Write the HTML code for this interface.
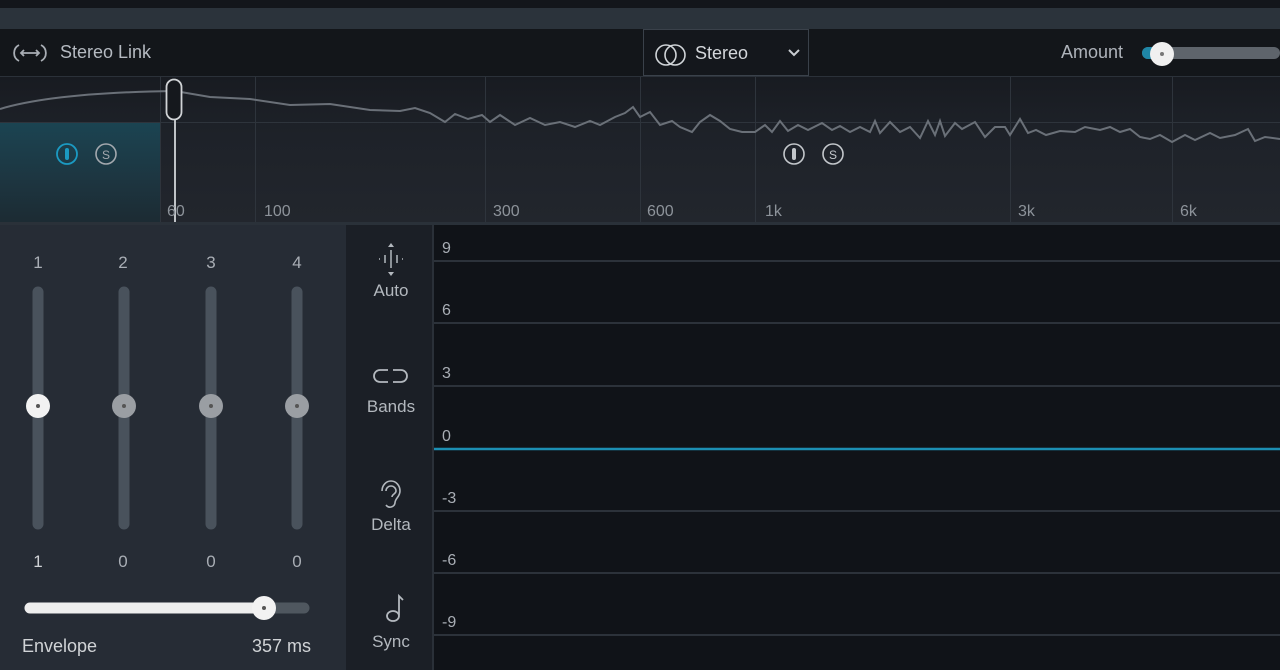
<!DOCTYPE html>
<html><head><meta charset="utf-8"><style>
*{margin:0;padding:0;box-sizing:border-box}
body{width:1280px;height:670px;overflow:hidden;background:#12151a;font-family:"Liberation Sans",sans-serif;color:#b9bec5;position:relative}
.a{position:absolute}
</style></head><body>
<div class="a" style="left:0;top:0;width:1280px;height:8px;background:#13161b"></div>
<div class="a" style="left:0;top:8px;width:1280px;height:21px;background:#2b333b"></div>
<div class="a" style="left:0;top:29px;width:1280px;height:48px;background:#13161a;border-bottom:1px solid #2b3139"></div>
<svg class="a" style="left:12px;top:42px" width="36" height="22" viewBox="0 0 36 22" fill="none" stroke="#a9aeb5" stroke-width="1.8"><path d="M7 3 A9 9 0 0 0 7 19"/><path d="M29 3 A9 9 0 0 1 29 19"/><path d="M10 11H26M12 8l-3 3 3 3M24 8l3 3-3 3"/></svg>
<div class="a" style="left:60px;top:42px;font-size:18px;color:#b5bac1">Stereo Link</div>
<div class="a" style="left:643px;top:29px;width:166px;height:47px;border:1px solid #3a414a;background:#14171c"></div>
<svg class="a" style="left:654px;top:43px" width="34" height="24" viewBox="0 0 34 24" fill="none" stroke="#d0d4d8" stroke-width="1.6"><circle cx="12" cy="12" r="10"/><circle cx="21" cy="12" r="10"/></svg>
<div class="a" style="left:695px;top:43px;font-size:18px;color:#d4d7db">Stereo</div>
<svg class="a" style="left:787px;top:48px" width="14" height="10" viewBox="0 0 14 10" fill="none" stroke="#c9cdd2" stroke-width="2"><path d="M2 2l5 5 5-5"/></svg>
<div class="a" style="left:1061px;top:42px;font-size:18px;color:#aeb3ba">Amount</div>
<div class="a" style="left:1142px;top:47px;width:138px;height:12px;border-radius:6px;background:#5e646b"></div>
<div class="a" style="left:1142px;top:47px;width:20px;height:12px;border-radius:6px;background:#1f86a6"></div>
<div class="a" style="left:1150px;top:42px;width:24px;height:24px;border-radius:50%;background:#f0f0f0"></div>
<div class="a" style="left:1160px;top:52px;width:4px;height:4px;border-radius:50%;background:#777"></div>

<!-- spectrum -->
<div class="a" style="left:0;top:77px;width:1280px;height:146px;background:linear-gradient(#181b21,#1e2229 40%,#22262d)"></div>
<div class="a" style="left:0;top:122px;width:160px;height:100px;background:linear-gradient(#1b4452,#1d3540 60%,#1c2b33)"></div>
<svg class="a" style="left:0;top:77px" width="1280" height="146">
<g stroke="#2e343c" stroke-width="1"><line x1="0" y1="45.5" x2="1280" y2="45.5"/><line x1="160.5" y1="0" x2="160.5" y2="146"/><line x1="255.5" y1="0" x2="255.5" y2="146"/><line x1="485.5" y1="0" x2="485.5" y2="146"/><line x1="640.5" y1="0" x2="640.5" y2="146"/><line x1="755.5" y1="0" x2="755.5" y2="146"/><line x1="1010.5" y1="0" x2="1010.5" y2="146"/><line x1="1172.5" y1="0" x2="1172.5" y2="146"/></g>
<path d="M0 32 C40 20 100 15 175 14 L210 20 250 22 290 28 330 27 370 33 400 34 415 31 430 36 445 45 455 37 468 42 482 38 490 45 500 38 515 48 530 41 545 48 560 45 575 50 590 44 600 48 615 40 625 36 633 30 640 40 650 35 660 48 672 44 680 50 692 55 700 45 710 38 720 44 730 52 742 55 755 55 765 48 772 55 780 44 788 54 798 48 808 53 822 46 832 53 840 49 850 55 860 50 870 55 875 44 880 56 890 45 900 55 910 50 920 61 928 44 935 58 940 44 945 59 955 46 962 52 975 45 985 60 995 50 1005 50 1010 58 1020 42 1028 56 1036 53 1046 58 1060 54 1075 55 1085 50 1100 53 1110 50 1120 55 1130 52 1140 60 1150 62 1160 58 1172 65 1185 58 1195 63 1210 56 1220 61 1235 58 1248 52 1255 64 1265 60 1280 62" fill="none" stroke="#6a7078" stroke-width="2"/>
<rect x="166.5" y="2.5" width="15" height="40" rx="7.5" fill="#15181d" stroke="#d0d3d6" stroke-width="1.8"/>
<line x1="175" y1="43" x2="175" y2="146" stroke="#bfc3c7" stroke-width="2"/>
<circle cx="67" cy="77" r="10" fill="none" stroke="#1b9ac2" stroke-width="1.8"/><rect x="65" y="71" width="4" height="12" rx="2" fill="#1b9ac2"/>
<circle cx="106" cy="77" r="10" fill="none" stroke="#a3a8ae" stroke-width="1.6"/><text x="106" y="82" font-size="12" fill="#a3a8ae" text-anchor="middle" font-family="Liberation Sans">S</text>
<circle cx="794" cy="77" r="10" fill="none" stroke="#c3c7cb" stroke-width="1.6"/><rect x="792" y="71" width="4" height="12" rx="2" fill="#c3c7cb"/>
<circle cx="833" cy="77" r="10" fill="none" stroke="#c3c7cb" stroke-width="1.6"/><text x="833" y="82" font-size="12" fill="#c3c7cb" text-anchor="middle" font-family="Liberation Sans">S</text>
<g fill="#8d939a" font-size="16" font-family="Liberation Sans"><text x="167" y="139">60</text><text x="264" y="139">100</text><text x="493" y="139">300</text><text x="647" y="139">600</text><text x="765" y="139">1k</text><text x="1018" y="139">3k</text><text x="1180" y="139">6k</text></g>
</svg>
<div class="a" style="left:0;top:222px;width:1280px;height:3px;background:#2a3139"></div>

<!-- left panel -->
<div class="a" style="left:0;top:225px;width:346px;height:445px;background:#262c35"></div>
<svg class="a" style="left:0;top:225px" width="346" height="445" font-family="Liberation Sans">
<g fill="#a9aeb5" font-size="17" text-anchor="middle"><text x="38" y="43">1</text><text x="123" y="43">2</text><text x="211" y="43">3</text><text x="297" y="43">4</text>
<text x="38" y="342" fill="#d0d3d6">1</text><text x="123" y="342">0</text><text x="211" y="342">0</text><text x="297" y="342">0</text></g>
<g stroke="#49525c" stroke-width="11" stroke-linecap="round"><line x1="38" y1="67" x2="38" y2="299"/><line x1="124" y1="67" x2="124" y2="299"/><line x1="211" y1="67" x2="211" y2="299"/><line x1="297" y1="67" x2="297" y2="299"/></g>
<circle cx="38" cy="181" r="12" fill="#f2f2f2"/><circle cx="124" cy="181" r="12" fill="#9a9ea3"/><circle cx="211" cy="181" r="12" fill="#9a9ea3"/><circle cx="297" cy="181" r="12" fill="#9a9ea3"/>
<g fill="#555"><circle cx="38" cy="181" r="2"/><circle cx="124" cy="181" r="2"/><circle cx="211" cy="181" r="2"/><circle cx="297" cy="181" r="2"/></g>
<line x1="30" y1="383" x2="304" y2="383" stroke="#4f575f" stroke-width="11" stroke-linecap="round"/>
<line x1="30" y1="383" x2="264" y2="383" stroke="#eeeeee" stroke-width="11" stroke-linecap="round"/>
<circle cx="264" cy="383" r="12" fill="#f2f2f2"/><circle cx="264" cy="383" r="2" fill="#555"/>
<text x="22" y="427" font-size="18" fill="#d0d3d6">Envelope</text><text x="311" y="427" font-size="18" fill="#d0d3d6" text-anchor="end">357 ms</text>
</svg>

<!-- side buttons -->
<div class="a" style="left:346px;top:225px;width:86px;height:445px;background:#1b1f26"></div>
<svg class="a" style="left:346px;top:225px" width="86" height="445" font-family="Liberation Sans">
<g stroke="#b3b8be" stroke-width="1.5" fill="none"><line x1="45" y1="25" x2="45" y2="43"/><line x1="39" y1="30" x2="39" y2="38"/><line x1="51" y1="30" x2="51" y2="38"/><line x1="33" y1="34" x2="34" y2="34"/><line x1="56" y1="34" x2="57" y2="34"/></g>
<path d="M45 18l-3 4h6z M45 51l-3-4h6z" fill="#b3b8be"/>
<text x="45" y="71" font-size="17" fill="#b3b8be" text-anchor="middle">Auto</text>
<path d="M42 145h-8a6 6 0 0 1 0-12h8 M47 133h8a6 6 0 0 1 0 12h-8" stroke="#b3b8be" stroke-width="1.8" fill="none" transform="translate(0,12)"/>
<text x="45" y="187" font-size="17" fill="#b3b8be" text-anchor="middle">Bands</text>
<path d="M36 266a9 10 0 1 1 18 0c0 6-5 7-5 12a5 5 0 0 1-9 2 M40 266a5 5 0 0 1 10 0c0 3-4 3-4 6" stroke="#b3b8be" stroke-width="1.6" fill="none"/>
<text x="45" y="305" font-size="17" fill="#b3b8be" text-anchor="middle">Delta</text>
<ellipse cx="47" cy="391" rx="6" ry="5" stroke="#b3b8be" stroke-width="1.8" fill="none"/><path d="M53 390V371l4 4" stroke="#b3b8be" stroke-width="1.8" fill="none"/>
<text x="45" y="422" font-size="17" fill="#b3b8be" text-anchor="middle">Sync</text>
</svg>

<!-- graph -->
<div class="a" style="left:432px;top:225px;width:848px;height:445px;background:#101318;border-left:2px solid #2a3038"></div>
<svg class="a" style="left:434px;top:225px" width="846" height="445" font-family="Liberation Sans">
<g stroke="#2c323a" stroke-width="2"><line x1="0" y1="36" x2="846" y2="36"/><line x1="0" y1="98" x2="846" y2="98"/><line x1="0" y1="161" x2="846" y2="161"/><line x1="0" y1="286" x2="846" y2="286"/><line x1="0" y1="348" x2="846" y2="348"/><line x1="0" y1="410" x2="846" y2="410"/></g>
<line x1="0" y1="224" x2="846" y2="224" stroke="#1c8fb3" stroke-width="2.5"/>
<g fill="#a9aeb5" font-size="16"><text x="8" y="28">9</text><text x="8" y="90">6</text><text x="8" y="153">3</text><text x="8" y="216">0</text><text x="8" y="278">-3</text><text x="8" y="340">-6</text><text x="8" y="402">-9</text></g>
</svg>
</body></html>
